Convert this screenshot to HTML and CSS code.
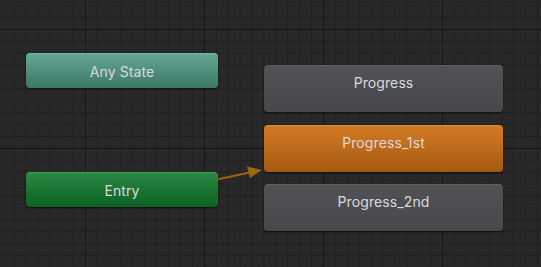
FILE: index.html
```html
<!DOCTYPE html>
<html lang="en">
<head>
  <meta charset="UTF-8">
  <title>Animator</title>
  <link rel="stylesheet" href="styles.css">
</head>
<body>
  <div class="graph">
    <!-- transition Entry -> Progress_1st -->
    <svg class="transitions" width="541" height="267" viewBox="0 0 541 267">
      <line x1="217" y1="179.5" x2="252" y2="172" class="edge" />
      <polygon points="262,170 247,166.5 250,178" class="edge-head" />
    </svg>

    <div class="node any-state" style="left:26px; top:53px;">Any State</div>
    <div class="node entry" style="left:26px; top:172px;">Entry</div>

    <div class="node state" style="left:264px; top:65px;">Progress</div>
    <div class="node state default" style="left:264px; top:125px;">Progress_1st</div>
    <div class="node state" style="left:264px; top:184px;">Progress_2nd</div>
  </div>
</body>
</html>
```
FILE: styles.css
```css
body {
  margin: 0;
  width: 541px;
  height: 267px;
  overflow: hidden;
  font-family: Inter, "Noto Sans", sans-serif;
}

.graph {
  position: relative;
  width: 541px;
  height: 267px;
  background-color: #282828;
  background-image:
    linear-gradient(to right, #161616 1px, transparent 1px),
    linear-gradient(to bottom, #161616 1px, transparent 1px),
    linear-gradient(to right, #202020 1px, transparent 1px),
    linear-gradient(to bottom, #202020 1px, transparent 1px);
  background-size: 119px 119px, 119px 119px, 11.9px 11.9px, 11.9px 11.9px;
  background-position: 85px 29px;
}

.transitions {
  position: absolute;
  left: 0;
  top: 0;
}

.edge {
  stroke: #9a660f;
  stroke-width: 2;
}

.edge-head {
  fill: #9a660f;
}

.node {
  position: absolute;
  box-sizing: border-box;
  display: flex;
  align-items: center;
  justify-content: center;
  border-radius: 4px;
  color: #dadada;
  font-size: 14px;
  letter-spacing: 0.1px;
  box-shadow: 0 1px 2px rgba(0, 0, 0, 0.6);
}

.any-state,
.entry {
  width: 192px;
  height: 35px;
}

.any-state {
  background: linear-gradient(to bottom, #64a794, #3c7667);
  border-top: 1px solid #78b6a4;
}

.entry {
  background: linear-gradient(to bottom, #2c8843, #0a6121);
  border-top: 1px solid #4a9a5c;
}

.state {
  width: 239px;
  height: 47px;
  background: linear-gradient(to bottom, #505256, #46484b);
  border-top: 1px solid #5c5e62;
  padding-bottom: 13px;
}

.state.default {
  background: linear-gradient(to bottom, #d27b25, #a55910);
  border-top: 1px solid #dc8a3a;
}
```
